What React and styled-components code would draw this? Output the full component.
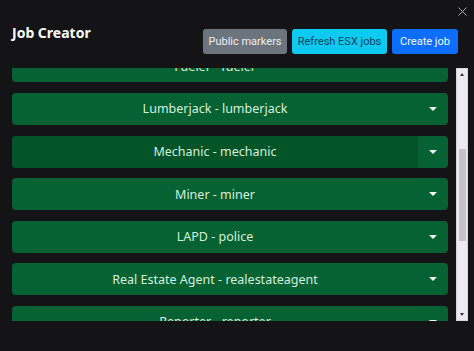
import React, { useLayoutEffect, useRef, useState } from 'react'
import styled, { createGlobalStyle } from 'styled-components'
import { X } from 'lucide-react'

const jobs = [
  ['Ambulance', 'ambulance'],
  ['Banker', 'banker'],
  ['Car Dealer', 'cardealer'],
  ['Fisherman', 'fisherman'],
  ['Fueler', 'fueler'],
  ['Lumberjack', 'lumberjack'],
  ['Mechanic', 'mechanic'],
  ['Miner', 'miner'],
  ['LAPD', 'police'],
  ['Real Estate Agent', 'realestateagent'],
  ['Reporter', 'reporter'],
  ['Butcher', 'slaughterer'],
  ['Tailor', 'tailor'],
  ['Taxi', 'taxi'],
  ['Unemployed', 'unemployed'],
]

const SCROLL_TOP = 188

const GlobalStyle = createGlobalStyle`
  html, body { margin: 0; padding: 0; background: #141416; }
  body { font-family: 'Noto Sans', 'Liberation Sans', sans-serif; }
`

const Modal = styled.div`
  position: relative;
  width: 474px;
  height: 351px;
  background: #141416;
  overflow: hidden;
`

const CloseButton = styled.button`
  position: absolute;
  top: 4px;
  right: 4px;
  padding: 0;
  border: 0;
  background: none;
  color: #a9a9ad;
  display: flex;
  cursor: pointer;
`

const Header = styled.div`
  display: flex;
  justify-content: space-between;
  align-items: flex-start;
  padding: 24px 16px 0 12px;
`

const Title = styled.h1`
  margin: 0;
  font-size: 14px;
  font-weight: 700;
  line-height: 18px;
  color: #fff;
`

const Actions = styled.div`
  display: flex;
  gap: 5px;
  margin-top: 5px;
`

const variants = {
  secondary: { bg: '#6c757d', fg: '#eef0f2', w: 84 },
  info: { bg: '#0dcaf0', fg: '#0b4460', w: 95 },
  primary: { bg: '#0d6efd', fg: '#f2f6ff', w: 66 },
}

const ActionButton = styled.button`
  width: ${p => variants[p.$variant].w}px;
  height: 25px;
  padding: 0;
  border: 0;
  border-radius: 3px;
  font-family: Roboto, 'Noto Sans', sans-serif;
  font-size: 11px;
  white-space: nowrap;
  background: ${p => variants[p.$variant].bg};
  color: ${p => variants[p.$variant].fg};
`

const Body = styled.div`
  display: flex;
  gap: 8px;
  margin: 14px 6px 0 12px;
  height: 253px;
`

const List = styled.div`
  flex: 1;
  overflow: hidden;
  display: flex;
  flex-direction: column;
  gap: 10.6px;
`

const Row = styled.div`
  flex: none;
  display: flex;
  height: 32px;
  border-radius: 4px;
  overflow: hidden;
  background: #066133;
`

const RowLabel = styled.div`
  flex: 1;
  display: flex;
  align-items: center;
  justify-content: center;
  font-size: 12.5px;
  color: #d6f0da;
  background: ${p => (p.$hover ? '#035429' : 'transparent')};
`

const Toggle = styled.div`
  width: 30px;
  display: flex;
  align-items: center;
  justify-content: center;
`

const Caret = styled.span`
  width: 0;
  height: 0;
  border-left: 4px solid transparent;
  border-right: 4px solid transparent;
  border-top: 4px solid #f2f7f3;
`

const ScrollBar = styled.div`
  width: 12px;
  box-sizing: border-box;
  display: flex;
  flex-direction: column;
  background: #ebebf0;
  border: 1px solid #d6d6da;
`

const ScrollArrow = styled.div`
  height: 11px;
  flex: none;
  display: flex;
  align-items: center;
  justify-content: center;

  &::before {
    content: '';
    border-left: 2.5px solid transparent;
    border-right: 2.5px solid transparent;
    ${p => (p.$down ? 'border-top: 3px solid #333;' : 'border-bottom: 3px solid #333;')}
  }
`

const Track = styled.div`
  flex: 1;
  position: relative;
`

const Thumb = styled.div`
  position: absolute;
  left: 2px;
  right: 1px;
  background: #c3c3c8;
`

export default function App() {
  const listRef = useRef(null)
  const trackRef = useRef(null)
  const [thumb, setThumb] = useState({ top: 0, height: 0 })

  useLayoutEffect(() => {
    const list = listRef.current
    const track = trackRef.current
    if (!list || !track) return
    list.scrollTop = SCROLL_TOP
    const total = list.scrollHeight
    const view = list.clientHeight
    const trackH = track.clientHeight
    const height = (view / total) * trackH
    const top = (list.scrollTop / (total - view)) * (trackH - height)
    setThumb({ top, height })
  }, [])

  return (
    <Modal>
      <GlobalStyle />
      <CloseButton aria-label="Close">
        <X size={15} strokeWidth={1.6} />
      </CloseButton>
      <Header>
        <Title>Job Creator</Title>
        <Actions>
          <ActionButton $variant="secondary">Public markers</ActionButton>
          <ActionButton $variant="info">Refresh ESX jobs</ActionButton>
          <ActionButton $variant="primary">Create job</ActionButton>
        </Actions>
      </Header>
      <Body>
        <List ref={listRef}>
          {jobs.map(([label, name]) => (
            <Row key={name}>
              <RowLabel $hover={name === 'mechanic'}>
                {label} - {name}
              </RowLabel>
              <Toggle>
                <Caret />
              </Toggle>
            </Row>
          ))}
        </List>
        <ScrollBar>
          <ScrollArrow />
          <Track ref={trackRef}>
            <Thumb style={{ top: thumb.top, height: thumb.height }} />
          </Track>
          <ScrollArrow $down />
        </ScrollBar>
      </Body>
    </Modal>
  )
}
